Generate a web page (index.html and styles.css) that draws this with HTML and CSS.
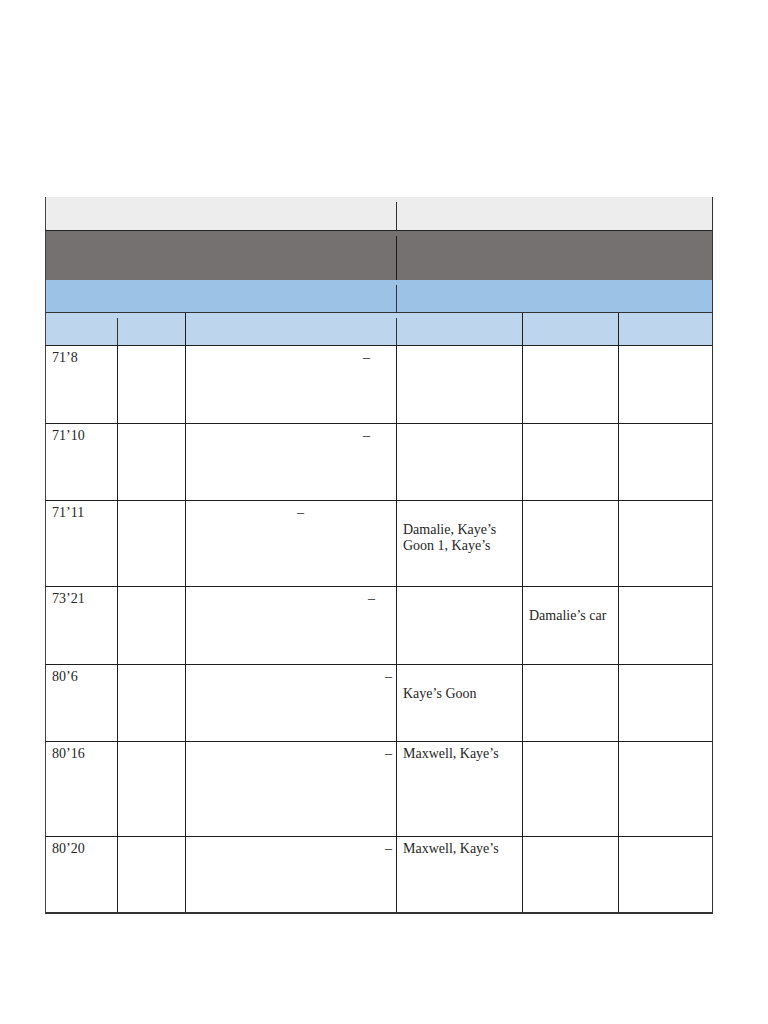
FILE: index.html
```html
<!DOCTYPE html>
<html lang="en">
<head>
<meta charset="utf-8">
<title>Scene breakdown</title>
<link rel="stylesheet" href="styles.css">
</head>
<body>
<div class="sheet">
  <div class="row band band-top">
    <div class="half first"></div>
    <div class="half second inset"></div>
  </div>
  <div class="row band band-dark">
    <div class="half first"></div>
    <div class="half second inset"></div>
  </div>
  <div class="row band band-blue">
    <div class="half first"></div>
    <div class="half second inset"></div>
  </div>
  <div class="row grid head">
    <div class="cell first"></div>
    <div class="cell inset"></div>
    <div class="cell"></div>
    <div class="cell inset"></div>
    <div class="cell"></div>
    <div class="cell"></div>
  </div>

  <div class="row grid h78">
    <div class="cell first">71’8</div>
    <div class="cell"></div>
    <div class="cell"><span class="dash d171">–</span></div>
    <div class="cell"></div>
    <div class="cell"></div>
    <div class="cell"></div>
  </div>
  <div class="row grid h77">
    <div class="cell first">71’10</div>
    <div class="cell"></div>
    <div class="cell"><span class="dash d171">–</span></div>
    <div class="cell"></div>
    <div class="cell"></div>
    <div class="cell"></div>
  </div>
  <div class="row grid h86">
    <div class="cell first">71’11</div>
    <div class="cell"></div>
    <div class="cell"><span class="dash d105">–</span></div>
    <div class="cell"><p class="line2">Damalie, Kaye’s Goon 1, Kaye’s</p></div>
    <div class="cell"></div>
    <div class="cell"></div>
  </div>
  <div class="row grid h78">
    <div class="cell first">73’21</div>
    <div class="cell"></div>
    <div class="cell"><span class="dash d176">–</span></div>
    <div class="cell"></div>
    <div class="cell"><p class="line2">Damalie’s car</p></div>
    <div class="cell"></div>
  </div>
  <div class="row grid h77">
    <div class="cell first">80’6</div>
    <div class="cell"></div>
    <div class="cell"><span class="dash d193">–</span></div>
    <div class="cell"><p class="line2">Kaye’s Goon</p></div>
    <div class="cell"></div>
    <div class="cell"></div>
  </div>
  <div class="row grid h95">
    <div class="cell first">80’16</div>
    <div class="cell"></div>
    <div class="cell"><span class="dash d193">–</span></div>
    <div class="cell">Maxwell, Kaye’s</div>
    <div class="cell"></div>
    <div class="cell"></div>
  </div>
  <div class="row grid h76 last">
    <div class="cell first">80’20</div>
    <div class="cell"></div>
    <div class="cell"><span class="dash d193">–</span></div>
    <div class="cell">Maxwell, Kaye’s</div>
    <div class="cell"></div>
    <div class="cell"></div>
  </div>
</div>
</body>
</html>
```

FILE: styles.css
```css
* {
  box-sizing: border-box;
}

html, body {
  margin: 0;
  padding: 0;
  background: #ffffff;
}

body {
  font-family: "Liberation Serif", "Times New Roman", serif;
  font-size: 14px;
  line-height: 16.7px;
  color: #262626;
}

.sheet {
  margin: 197px 0 0 45px;
  width: 668px;
  border-right: 1px solid #333333;
}

.row {
  display: grid;
}

.band {
  grid-template-columns: 351px 316px;
}

.grid {
  grid-template-columns: 72px 68px 211px 126px 96px 94px;
}

.band-top {
  height: 33px;
  background: #ededed;
}

.band-dark {
  height: 50px;
  background: #757171;
  border-top: 1px solid #222222;
}

.band-blue {
  height: 32px;
  background: #9cc2e5;
}

.head {
  height: 33px;
  background: #bdd6ee;
  border-top: 1px solid #333333;
}

.half.first,
.cell.first {
  border-left: 1px solid #444444;
}

.cell {
  border-left: 1px solid #1f1f1f;
  padding: 4px 6px 0 6px;
}

.inset {
  border-left: 0;
  background: linear-gradient(#333333, #333333) left 5px / 1px calc(100% - 5px) no-repeat;
}

.band-dark .inset {
  background: linear-gradient(#1c1c1c, #1c1c1c) left 5px / 1px calc(100% - 5px) no-repeat;
}

.head .inset {
  padding-left: 7px;
}

.h78 { height: 78px; border-top: 1px solid #1f1f1f; }
.h77 { height: 77px; border-top: 1px solid #1f1f1f; }
.h86 { height: 86px; border-top: 1px solid #1f1f1f; }
.h95 { height: 95px; border-top: 1px solid #1f1f1f; }
.h76 { height: 76px; border-top: 1px solid #1f1f1f; }

.last {
  height: 78px;
  border-bottom: 2px solid #333333;
}

.dash {
  display: block;
}

.d105 { padding-left: 105px; }
.d171 { padding-left: 171px; }
.d176 { padding-left: 176px; }
.d193 { padding-left: 193px; }

.line2 {
  margin: 16.7px 0 0 0;
}
```
